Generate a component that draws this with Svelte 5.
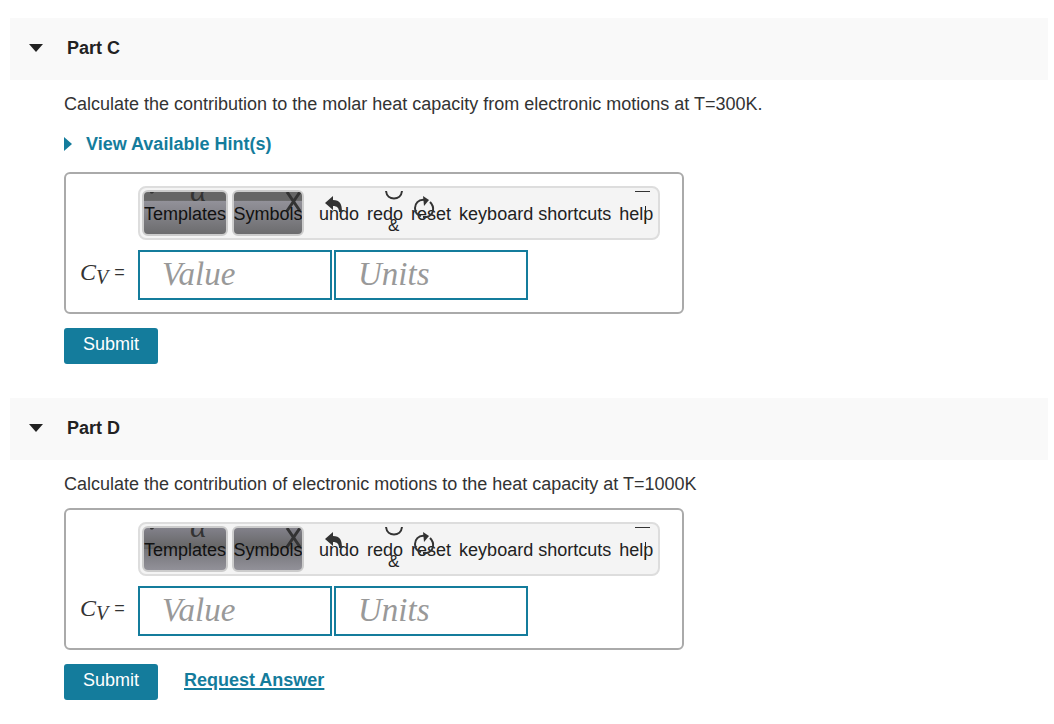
<script lang="ts">
  interface Part {
    id: string
    title: string
    question: string
    hints: boolean
    canRequest: boolean
  }

  const parts: Part[] = [
    {
      id: 'c',
      title: 'Part C',
      question: 'Calculate the contribution to the molar heat capacity from electronic motions at T=300K.',
      hints: true,
      canRequest: false,
    },
    {
      id: 'd',
      title: 'Part D',
      question: 'Calculate the contribution of electronic motions to the heat capacity at T=1000K',
      hints: false,
      canRequest: true,
    },
  ]

  let answers = $state<Record<string, { value: string; units: string }>>({
    c: { value: '', units: '' },
    d: { value: '', units: '' },
  })

  function reset(id: string) {
    answers[id].value = ''
    answers[id].units = ''
  }
</script>

<main>
  {#each parts as part (part.id)}
    <section class="part">
      <header>
        <button class="toggle" aria-label="Collapse {part.title}">
          <svg viewBox="0 0 14 8" width="14" height="8"><path d="M0 0h14L7 8z" fill="#222" /></svg>
        </button>
        <h2>{part.title}</h2>
      </header>

      <div class="body">
        <p>{part.question}</p>
        {#if part.hints}
          <a class="hints" href="#hints">
            <svg viewBox="0 0 8 14" width="8" height="14"><path d="M0 0l8 7-8 7z" fill="currentColor" /></svg>
            View Available Hint(s)
          </a>
        {/if}

        <form class="answer" id="form-{part.id}" onsubmit={(e) => e.preventDefault()}>
          <div class="toolbar" role="toolbar" aria-label="Answer tools">
            <button type="button" class="menu menu-{part.id}">
              <svg class="icon tick" viewBox="0 0 6 3" width="6" height="3">
                <path d="M1 0c0 2 3 2 4 0z" fill="#333" />
              </svg>
              <span class="glyph alpha" aria-hidden="true">α</span>
              <span class="label">Templates</span>
            </button>
            <button type="button" class="menu menu-{part.id} symbols">
              <svg class="icon cross" viewBox="0 0 17 22" width="17" height="22">
                <path d="M2 0l13 19M15 0L2 19" stroke="#333" stroke-width="3" />
              </svg>
              <span class="label">Symbols</span>
            </button>
            <button type="button" class="tool">
              undo
              <svg class="icon undo" viewBox="0 0 18 18" width="18" height="18">
                <path d="M0 7L8 0v4c7 0 9 4 9 12h-3c0-4-2-6-6-6v4z" fill="#333" />
              </svg>
            </button>
            <button type="button" class="tool">
              redo
              <svg class="icon redo" viewBox="0 0 18 9" width="18" height="9">
                <path d="M1 0c1 10 15 10 16 0" fill="none" stroke="#333" stroke-width="2" />
              </svg>
              <span class="glyph amp" aria-hidden="true">&amp;</span>
            </button>
            <button type="button" class="tool" onclick={() => reset(part.id)}>
              reset
              <svg class="icon reset" viewBox="0 0 22 24" width="22" height="24">
                <path d="M12 4C5 3 2 8 2 12c0 4 2 7 6 8M17 6c5 5 4 13-3 15h-4" fill="none" stroke="#333" stroke-width="2" />
                <path d="M10 0l6 4-5 6z" fill="#333" />
              </svg>
            </button>
            <button type="button" class="tool">keyboard shortcuts</button>
            <button type="button" class="tool">
              help
              <svg class="icon help" viewBox="0 0 16 34" width="16" height="34">
                <path d="M0 0h15v1H0z" fill="#333" />
                <path d="M10 15h1v18h-1z" fill="#222" />
              </svg>
            </button>
          </div>
          <div class="name"><i>C<sub>V</sub></i> =</div>
          <div class="fields">
            <input type="text" placeholder="Value" aria-label="Value" bind:value={answers[part.id].value} />
            <input type="text" placeholder="Units" aria-label="Units" bind:value={answers[part.id].units} />
          </div>
        </form>

        <div class="actions">
          <button class="submit" form="form-{part.id}">Submit</button>
          {#if part.canRequest}
            <a href="#answer">Request Answer</a>
          {/if}
        </div>
      </div>
    </section>
  {/each}
</main>

<style>
  :global(body) {
    margin: 0;
    background: #fff;
  }

  main {
    padding: 18px 6px 24px 10px;
    font: 18px/24px "Liberation Sans", Arial, sans-serif;
    color: #333;
  }

  button {
    padding: 0;
    border: 0;
    background: none;
    font: inherit;
    color: inherit;
    cursor: pointer;
  }

  svg { display: block; }

  .part + .part { margin-top: 34px; }

  header {
    display: flex;
    align-items: center;
    gap: 24px;
    height: 62px;
    padding: 0 19px 2px;
    box-sizing: border-box;
    background: #f9f9f9;
  }

  h2 {
    margin: 0;
    font-size: 18px;
    color: #222;
  }

  .body { padding: 12px 54px 0; }

  p { margin: 0; }

  a {
    color: #147c9c;
    font-weight: bold;
  }

  .hints {
    display: flex;
    align-items: center;
    gap: 14px;
    width: max-content;
    margin: 16px 0;
    text-decoration: none;
  }

  .answer {
    display: grid;
    grid-template-columns: 60px 1fr;
    row-gap: 10px;
    max-width: 620px;
    padding: 12px 22px 12px 12px;
    margin: 12px 0 14px;
    box-sizing: border-box;
    border: 2px solid #aaa;
    border-radius: 6px;
  }

  .toolbar {
    grid-column: 2;
    display: flex;
    align-items: center;
    gap: 8px;
    height: 54px;
    padding: 0 2px;
    box-sizing: border-box;
    border: 2px solid #ddd;
    border-radius: 8px;
    background: #f4f4f4;
    color: #222;
    white-space: nowrap;
  }

  .menu {
    position: relative;
    display: flex;
    align-items: center;
    justify-content: center;
    width: 86px;
    height: 46px;
    padding-top: 2px;
    margin-right: -4px;
    box-sizing: border-box;
    border: 2px solid #ccc;
    border-radius: 6px;
    overflow: hidden;
    color: #111;
  }

  .menu-c { background: linear-gradient(#666 0 20%, #929199 22%, #6c6c6e); }
  .menu-d { background: linear-gradient(#82818a, #646464 50%, #75757a 51%, #929199); }

  .symbols {
    width: 72px;
    margin-right: 7px;
  }

  .label { position: relative; }

  .glyph,
  .icon { position: absolute; }

  .tick {
    top: 0;
    left: 5px;
  }

  .alpha {
    top: -14px;
    left: 46px;
    font: italic 32px/24px "Liberation Serif", serif;
    color: #333;
  }

  .cross {
    top: 0;
    right: 0;
  }

  .amp {
    top: 14px;
    left: 21px;
    font-size: 17px;
  }

  .tool {
    position: relative;
    padding-top: 2px;
  }

  .undo { top: -4px; left: 6px; }
  .redo { top: -9px; left: 18px; }
  .reset { top: -4px; left: 2px; }
  .help { top: -9px; left: 16px; }

  .name {
    display: flex;
    align-items: center;
    gap: 6px;
    padding: 0 0 6px 2px;
  }

  .name i { font: italic 24px/24px "Liberation Serif", serif; }
  .name sub { font-size: 20px; line-height: 0; vertical-align: -4px; }

  .fields {
    display: flex;
    gap: 2px;
  }

  input {
    width: 194px;
    height: 50px;
    min-width: 0;
    padding: 0 22px 2px;
    box-sizing: border-box;
    border: 2px solid #147c9c;
    border-radius: 0;
    font: italic 33px/40px "Liberation Serif", serif;
    color: #333;
  }

  input::placeholder {
    color: #999;
    opacity: 1;
  }

  .actions {
    display: flex;
    align-items: center;
    gap: 26px;
  }

  .submit {
    width: 94px;
    height: 36px;
    padding-bottom: 4px;
    border-radius: 3px;
    background: #147c9c;
    color: #fff;
  }

  .actions a {
    padding-bottom: 4px;
    text-decoration-thickness: 2px;
    text-underline-offset: 2px;
  }
</style>
